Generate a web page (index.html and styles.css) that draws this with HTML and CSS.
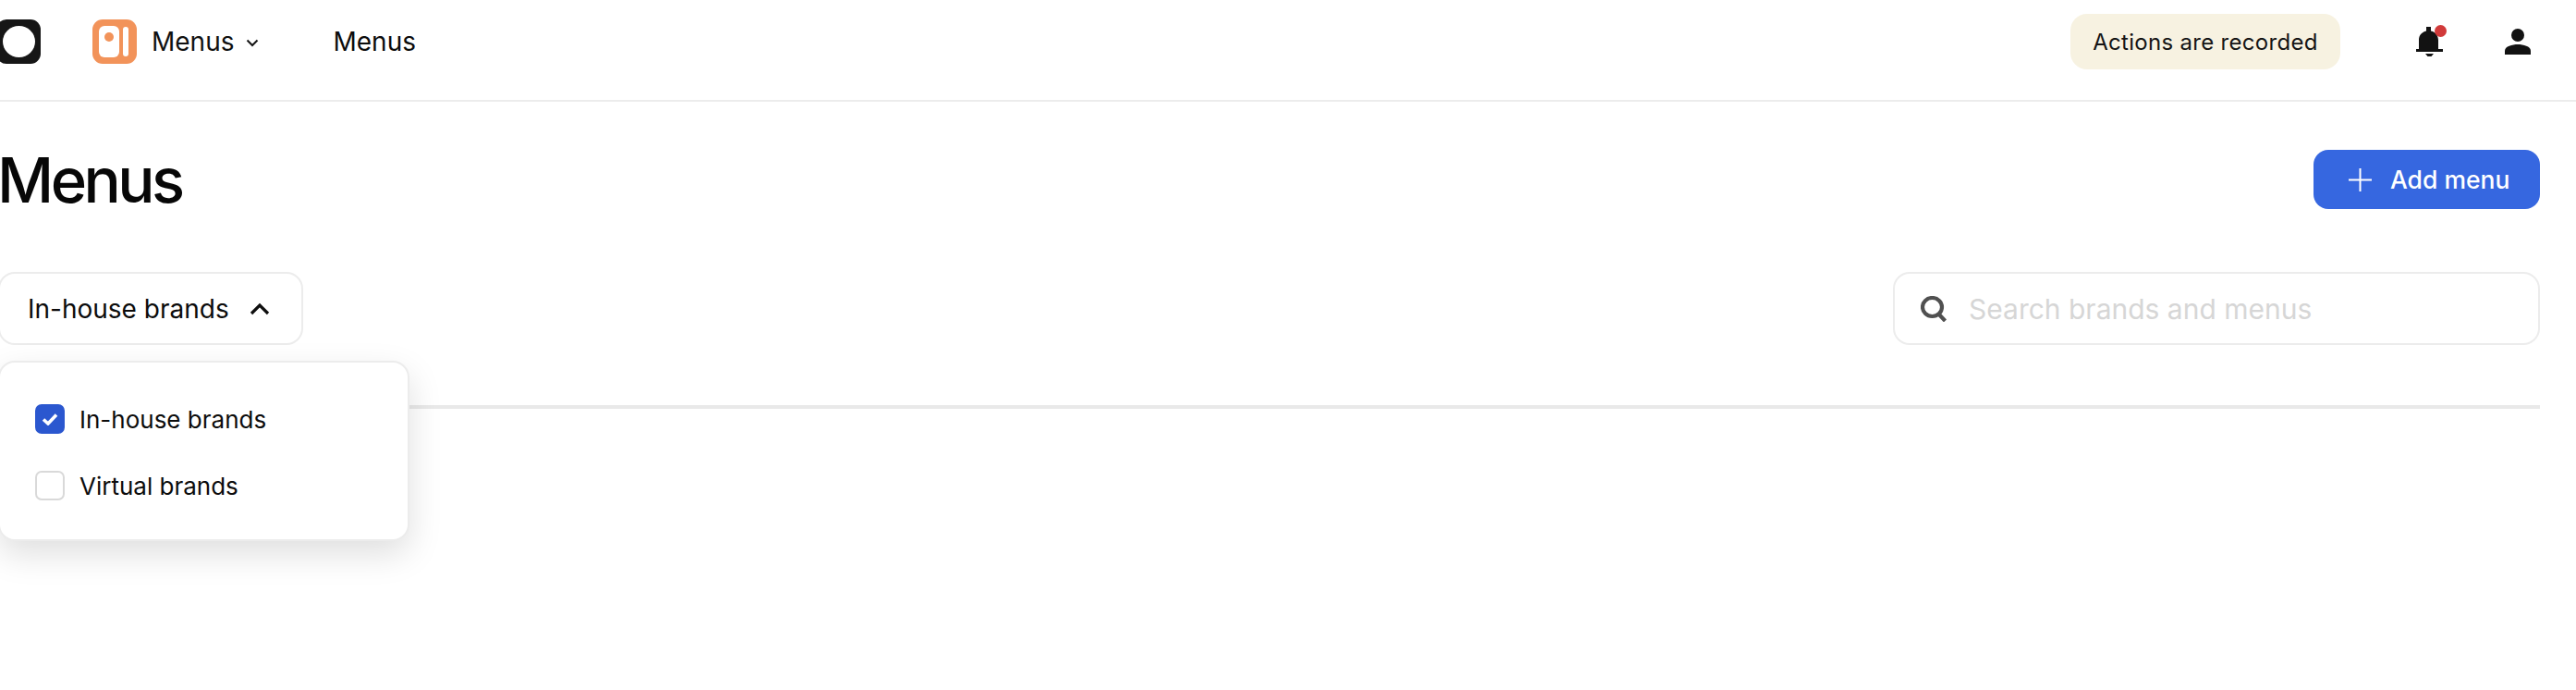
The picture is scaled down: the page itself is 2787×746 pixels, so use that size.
FILE: index.html
```html
<!DOCTYPE html>
<html lang="en">
<head>
<meta charset="utf-8">
<title>Menus</title>
<link rel="stylesheet" href="styles.css">
</head>
<body>
<header class="topbar">
  <div class="logo"></div>
  <svg class="app-icon" width="48" height="48" viewBox="0 0 48 48">
    <rect width="48" height="48" rx="11" fill="#f2935a"/>
    <rect x="7" y="7" width="22" height="34" rx="6" fill="#fff"/>
    <circle cx="18" cy="19" r="5" fill="#f2935a"/>
    <rect x="33" y="8" width="6" height="32" rx="3" fill="#fff"/>
  </svg>
  <span class="app-name">Menus</span>
  <svg class="app-chevron" width="14" height="9" viewBox="0 0 14 9"><path d="M1.5 1.5 7 7l5.5-5.5" fill="none" stroke="#151515" stroke-width="2"/></svg>
  <span class="crumb">Menus</span>
  <div class="recorded">Actions are recorded</div>
  <div class="bell">
    <svg width="30" height="32" viewBox="0 0 30 32"><path d="M0 24h3V14C3 9 6.500 5.500 11 4.500V0h5v4.500c5 1 8 5 8 10V24h5v3H0zM10 29h9l-2.500 3h-4z" fill="#121212"/></svg>
    <span class="bell-dot"></span>
  </div>
  <svg class="person" width="28" height="28" viewBox="0 0 28 28"><circle cx="14" cy="7" r="7" fill="#121212"/><path d="M0 28v-4c0-5 8-7 14-7s14 2 14 7v4z" fill="#121212"/></svg>
</header>
<main class="page">
  <div class="title-row">
    <h1 class="title">Menus</h1>
    <button class="add-btn">
      <svg width="25" height="25" viewBox="0 0 25 25"><path d="M12.500 0v25M0 12.500h25" stroke="#fff" stroke-width="2"/></svg>
      <span>Add menu</span>
    </button>
  </div>
  <div class="filter-row">
    <div class="filter">
      <button class="select">
        <span>In-house brands</span>
        <svg width="22" height="14" viewBox="0 0 22 14"><path d="M2 12 11 3l9 9" fill="none" stroke="#0e0e0e" stroke-width="3.200"/></svg>
      </button>
      <div class="popup">
        <label class="option">
          <span class="box box-on">
            <svg width="18" height="14" viewBox="0 0 18 14"><path d="M2 7.500 7 12l9-9.500" fill="none" stroke="#fff" stroke-width="3.600"/></svg>
          </span>
          <span>In-house brands</span>
        </label>
        <label class="option">
          <span class="box"></span>
          <span>Virtual brands</span>
        </label>
      </div>
    </div>
    <div class="search">
      <svg width="28" height="28" viewBox="0 0 28 28"><ellipse cx="12.500" cy="12" rx="10.500" ry="10" fill="none" stroke="#505050" stroke-width="4.200"/><path d="m19 19 7.500 8" stroke="#505050" stroke-width="4.200"/></svg>
      <span class="placeholder">Search brands and menus</span>
    </div>
  </div>
  <div class="divider"></div>
</main>
</body>
</html>
```
FILE: styles.css
```css
* { box-sizing: border-box; }
html, body { margin: 0; padding: 0; height: 100%; background: #fff; overflow: hidden; }
body { font-family: Inter, "Liberation Sans", sans-serif; color: #111; }
button { font: inherit; color: inherit; background: none; border: 0; padding: 0; }

.topbar { display: flex; align-items: center; height: 110px; border-bottom: 2px solid #ececec; padding: 0 49px 18px 0; }
.logo { flex: none; width: 48px; height: 48px; margin-left: -4px; border-radius: 11px; background: #161616; display: flex; align-items: center; justify-content: center; }
.logo::after { content: ""; width: 35px; height: 34px; border-radius: 50%; background: #fff; }
.app-icon { flex: none; margin-left: 56px; }
.app-name { margin-left: 16px; font-size: 28px; }
.app-chevron { margin-left: 12px; margin-top: 2px; }
.crumb { margin-left: 81px; font-size: 28px; color: #0c0c0c; }
.recorded { margin-left: auto; height: 60px; width: 292px; display: flex; align-items: center; justify-content: center; border-radius: 18px; background: #f7f2e1; font-size: 24px; letter-spacing: 0.3px; color: #151515; }
.bell { position: relative; margin-left: 82px; width: 30px; height: 32px; }
.bell svg { display: block; }
.bell-dot { position: absolute; top: -2px; right: -3px; width: 13px; height: 13px; border-radius: 50%; background: #d13a3a; }
.person { margin-left: 66px; }

.page { padding: 0 39px 0 0; }
.title-row { display: flex; align-items: center; justify-content: space-between; height: 184px; padding-bottom: 16px; }
.title { margin: 0 0 0 -3px; font-size: 67px; font-weight: 500; letter-spacing: -3.5px; color: #070707; }
.add-btn { width: 245px; height: 64px; display: flex; align-items: center; padding-left: 38px; gap: 20px; background: #3667e0; border-radius: 16px; color: #fff; font-size: 26.500px; font-weight: 500; }

.filter-row { display: flex; justify-content: space-between; height: 79px; }
.filter { position: relative; }
.select { margin-left: -2px; width: 330px; height: 79px; display: flex; align-items: center; padding-left: 30px; gap: 22px; border: 2px solid #ececec; border-radius: 18px; background: #fff; font-size: 28px; color: #0c0c0c; }
.popup { position: absolute; top: 96px; left: -2px; width: 445px; height: 195px; padding: 25px 0 0 38px; background: #fff; border: 2px solid #ececec; border-radius: 18px; box-shadow: 0 14px 36px rgba(0, 0, 0, .13); z-index: 2; }
.option { display: flex; align-items: center; gap: 16px; height: 72px; font-size: 26px; color: #0c0c0c; }
.box { flex: none; width: 32px; height: 32px; display: flex; align-items: center; justify-content: center; border: 2px solid #d9d9d9; border-radius: 7px; background: #fff; }
.box-on { background: #2b57cf; border-color: #2b57cf; }
.search { width: 700px; height: 79px; display: flex; align-items: center; padding-left: 28px; gap: 24px; border: 2px solid #ececec; border-radius: 18px; }
.placeholder { font-size: 30px; color: #d6d6d6; }
.divider { height: 4px; margin-top: 65px; background: #e9e9e9; }
```
